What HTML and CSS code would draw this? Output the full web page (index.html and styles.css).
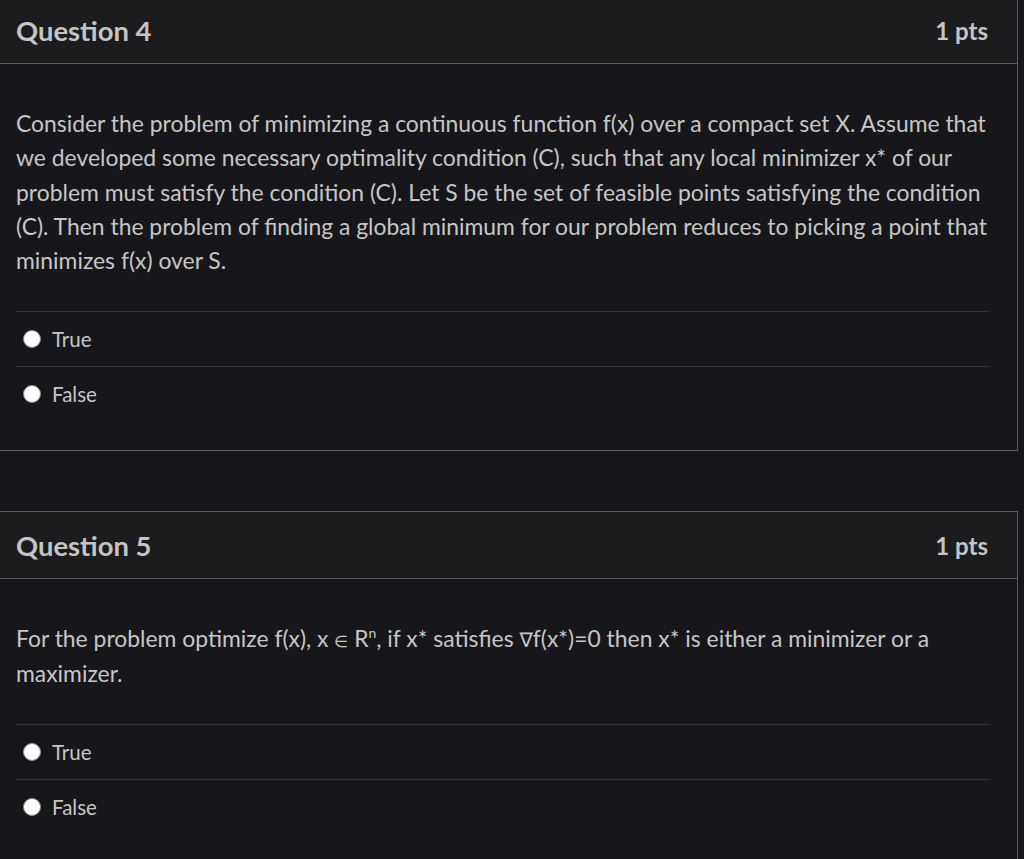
FILE: index.html
```html
<!DOCTYPE html>
<html lang="en">
<head>
<meta charset="utf-8">
<title>Quiz</title>
<link rel="stylesheet" href="styles.css">
</head>
<body>
<div class="quiz">
  <div class="question first">
    <div class="q-header">
      <h2 class="q-title">Question 4</h2>
      <span class="q-points">1 pts</span>
    </div>
    <div class="q-body">
      <p class="q-text">Consider the problem of minimizing a continuous function f(x) over a compact set X. Assume that we developed some necessary optimality condition (C), such that any local minimizer x* of our problem must satisfy the condition (C). Let S be the set of feasible points satisfying the condition (C). Then the problem of finding a global minimum for our problem reduces to picking a point that minimizes f(x) over S.</p>
      <div class="answers">
        <label class="answer"><input type="radio" name="q4" class="radio"><span class="label">True</span></label>
        <label class="answer"><input type="radio" name="q4" class="radio"><span class="label">False</span></label>
      </div>
    </div>
  </div>
  <div class="question">
    <div class="q-header">
      <h2 class="q-title">Question 5</h2>
      <span class="q-points">1 pts</span>
    </div>
    <div class="q-body">
      <p class="q-text">For the problem optimize f(x), x <span class="sym elem">∈</span> R<span class="sup">n</span>, if x* satisfies <span class="sym nabla">∇</span>f(x*)=0 then x* is either a minimizer or a maximizer.</p>
      <div class="answers">
        <label class="answer"><input type="radio" name="q5" class="radio"><span class="label">True</span></label>
        <label class="answer"><input type="radio" name="q5" class="radio"><span class="label">False</span></label>
      </div>
    </div>
  </div>
</div>
</body>
</html>
```
FILE: styles.css
```css
html, body {
  margin: 0;
  padding: 0;
  background: #17171b;
}
body {
  font-family: Lato, "Open Sans", sans-serif;
  color: #c6c6c6;
  overflow: hidden;
}
.quiz {
  padding-right: 6px;
}
.question {
  border: 1px solid #5c5c5c;
  border-left: none;
  margin-bottom: 60px;
}
.question.first {
  margin-top: -4px;
}
.q-header {
  height: 66px;
  background: #1c1c1e;
  border-bottom: 1px solid #5c5c5c;
  display: flex;
  align-items: center;
  justify-content: space-between;
  padding: 0 29px 0 16px;
}
.q-title {
  margin: 0;
  font-size: 27.4px;
  font-weight: 700;
  color: #c4c4c4;
}
.q-points {
  font-size: 24px;
  font-weight: 700;
  color: #c4c4c4;
}
.q-body {
  padding: 42px 28px 29px 16px;
}
.q-text {
  margin: 0 -8px 34px 0;
  font-size: 22.9px;
  line-height: 34.3px;
}
.sym {
  font-family: "DejaVu Sans", sans-serif;
  line-height: 0;
}
.elem {
  font-size: 16px;
}
.nabla {
  font-size: 20px;
}
.sup {
  font-size: 14px;
  line-height: 0;
  position: relative;
  top: -9px;
}
.answers {
  display: flex;
  flex-direction: column;
}
.answer {
  display: flex;
  align-items: center;
  height: 54px;
  border-top: 1px solid #333336;
  padding-left: 7px;
}
.radio {
  appearance: none;
  -webkit-appearance: none;
  margin: 0 11px 0 0;
  width: 18px;
  height: 18px;
  border-radius: 50%;
  background: #ffffff;
  border: 1px solid #8a8a8a;
  box-sizing: border-box;
}
.label {
  font-size: 20.5px;
  color: #c6c6c6;
}
```
